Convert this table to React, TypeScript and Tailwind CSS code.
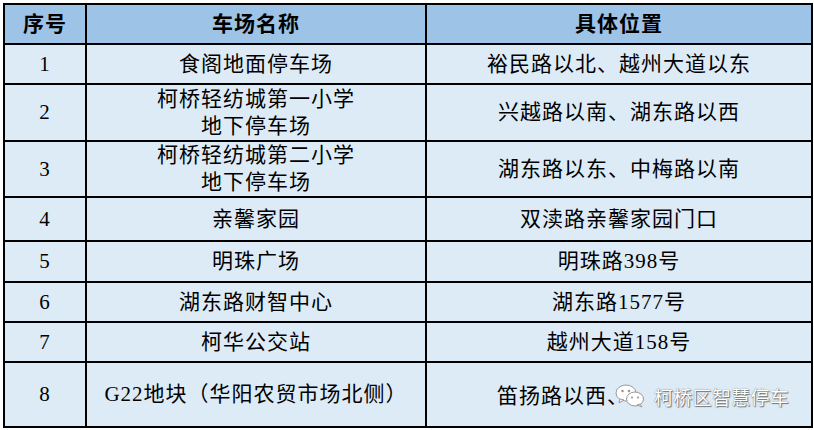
const rows: { no: string; name: string[]; place: string; h: string }[] = [
  { no: '1', name: ['食阁地面停车场'], place: '裕民路以北、越州大道以东', h: 'h-[40px]' },
  { no: '2', name: ['柯桥轻纺城第一小学', '地下停车场'], place: '兴越路以南、湖东路以西', h: 'h-[57px]' },
  { no: '3', name: ['柯桥轻纺城第二小学', '地下停车场'], place: '湖东路以东、中梅路以南', h: 'h-[55px]' },
  { no: '4', name: ['亲馨家园'], place: '双渎路亲馨家园门口', h: 'h-[44px]' },
  { no: '5', name: ['明珠广场'], place: '明珠路398号', h: 'h-[41px]' },
  { no: '6', name: ['湖东路财智中心'], place: '湖东路1577号', h: 'h-[40px]' },
  { no: '7', name: ['柯华公交站'], place: '越州大道158号', h: 'h-[40px]' },
  { no: '8', name: ['G22地块（华阳农贸市场北侧）'], place: '笛扬路以西、', h: 'h-[65px]' },
];

function WeChatIcon() {
  return (
    <svg width="30" height="24" viewBox="0 0 30 24">
      <ellipse cx="11" cy="9" rx="10" ry="8" fill="#fff" stroke="#9a9a9a" strokeWidth="1" />
      <path d="M5 15 L4 19 L9 16 Z" fill="#fff" stroke="#9a9a9a" strokeWidth="1" />
      <ellipse cx="20" cy="15" rx="8.5" ry="7" fill="#fff" stroke="#9a9a9a" strokeWidth="1" />
      <path d="M25 20 L27 23 L22 21 Z" fill="#fff" stroke="#9a9a9a" strokeWidth="1" />
      <circle cx="7.5" cy="7" r="1.3" fill="#9a9a9a" />
      <circle cx="14" cy="7" r="1.3" fill="#9a9a9a" />
      <circle cx="17" cy="13.5" r="1.1" fill="#9a9a9a" />
      <circle cx="23" cy="13.5" r="1.1" fill="#9a9a9a" />
    </svg>
  );
}

export default function App() {
  const cell = 'border-2 border-black text-center align-middle p-0';
  return (
    <div
      className="w-[814px] h-[430px] bg-white pt-[3px] pl-[3px] overflow-hidden"
      style={{ fontFamily: '"Liberation Serif", "Noto Sans CJK SC", serif' }}
    >
      <table className="border-collapse table-fixed w-[808px] text-[21px] tracking-[1px] text-black leading-[27px]">
        <colgroup>
          <col className="w-[82px]" />
          <col className="w-[340px]" />
          <col className="w-[386px]" />
        </colgroup>
        <thead>
          <tr className="h-[40px] bg-[#9dc3e6]">
            <th className={`${cell} font-bold`}>序号</th>
            <th className={`${cell} font-bold`}>车场名称</th>
            <th className={`${cell} font-bold`}>具体位置</th>
          </tr>
        </thead>
        <tbody className="bg-[#ddebf7]">
          {rows.map((r) => (
            <tr key={r.no} className={r.h}>
              <td className={cell}>{r.no}</td>
              <td className={cell}>
                {r.name.map((l) => (
                  <div key={l}>{l}</div>
                ))}
              </td>
              <td className={cell}>
                {r.no === '8' ? (
                  <div className="flex items-center pl-[70px] pt-[3px]">
                    <span>{r.place}</span>
                    <span className="-ml-[14px] flex">
                      <WeChatIcon />
                    </span>
                    <span
                      className="ml-[9px] text-white text-[19px] tracking-[0.3px]"
                      style={{ fontFamily: '"Noto Sans CJK SC", sans-serif', textShadow: '0 0 1px #555, 1px 1px 1px #777' }}
                    >
                      柯桥区智慧停车
                    </span>
                  </div>
                ) : (
                  r.place
                )}
              </td>
            </tr>
          ))}
        </tbody>
      </table>
    </div>
  );
}
